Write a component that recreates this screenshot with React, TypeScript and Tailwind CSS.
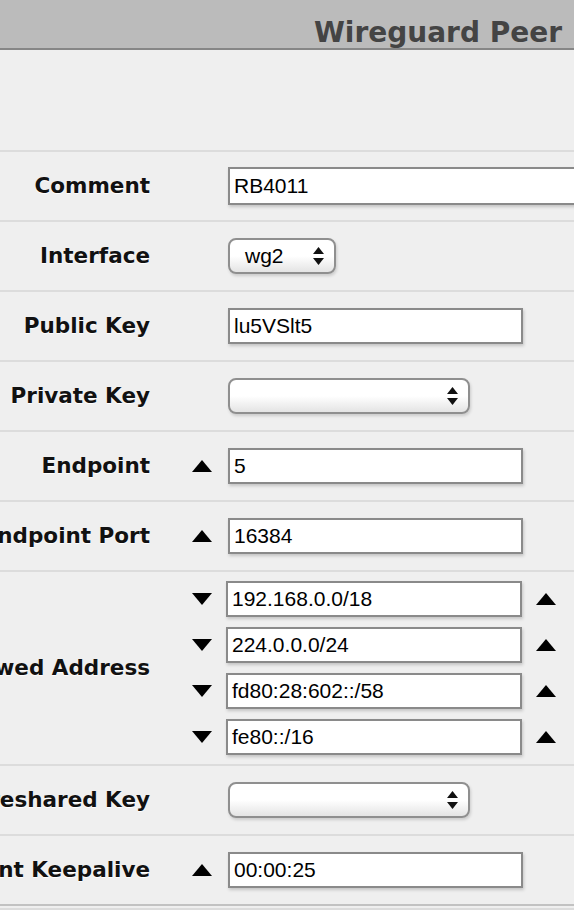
import type { ReactNode } from "react";

const labelFont = "font-['DejaVu_Sans',Verdana,sans-serif]";
const inputFont = "font-['Liberation_Sans',Arial,sans-serif]";
const labelText = `w-[150px] shrink-0 flex justify-end whitespace-nowrap ${labelFont} text-[21.5px] font-bold text-[#111] [text-shadow:0_1px_1px_#fff]`;

function Triangle({ dir }: { dir: "up" | "down" }) {
  return (
    <svg width="20" height="12" viewBox="0 0 20 12" className="block">
      {dir === "up" ? <polygon points="10,0 20,12 0,12" fill="#000" /> : <polygon points="0,0 20,0 10,12" fill="#000" />}
    </svg>
  );
}

function TextField({ value, width, height = 36 }: { value: string; width: string; height?: number }) {
  return (
    <div
      className={`${width} ${height === 38 ? "h-[38px]" : "h-[36px]"} shrink-0 flex items-center border-2 border-[#8a8a8a] bg-white pl-[4px] shadow-[1px_2px_3px_rgba(0,0,0,0.18)] ${inputFont} text-[21px] text-black`}
    >
      {value}
    </div>
  );
}

function SelectBox({ value, width }: { value: string; width: string }) {
  return (
    <div
      className={`${width} h-[36px] flex items-center justify-between rounded-[8px] border-2 border-[#8f8f8f] bg-gradient-to-b from-white via-white to-[#e4e4e4] pl-[15px] pr-[10px] shadow-[1px_2px_3px_rgba(0,0,0,0.15)] ${inputFont} text-[21px] text-black`}
    >
      <span>{value}</span>
      <svg width="11" height="19" viewBox="0 0 11 19" className="block">
        <polygon points="5.5,0 11,7 0,7" fill="#111" />
        <polygon points="0,11 11,11 5.5,18" fill="#111" />
      </svg>
    </div>
  );
}

function Row({ label, arrow, children }: { label: string; arrow?: boolean; children: ReactNode }) {
  return (
    <div className="flex items-center h-[70px] border-b-2 border-[#dcdcdc]">
      <div className={labelText}>{label}</div>
      <div className="w-[78px] shrink-0 flex justify-end pr-[16px]">{arrow ? <Triangle dir="up" /> : null}</div>
      {children}
    </div>
  );
}

const allowed = ["192.168.0.0/18", "224.0.0.0/24", "fd80:28:602::/58", "fe80::/16"];

export default function App() {
  return (
    <main className="w-[574px] h-[910px] overflow-hidden bg-[#efefef]">
      <header className="h-[50px] flex items-end justify-end border-b-2 border-[#868686] bg-[#bbbbbb] pr-[12px]">
        <h1 className={`${labelFont} text-[28px] font-bold leading-[30px] text-[#444]`}>Wireguard Peer</h1>
      </header>
      <div className="h-[102px] border-b-2 border-[#dcdcdc]" />

      <Row label="Comment">
        <TextField value="RB4011" width="w-[360px]" height={38} />
      </Row>
      <Row label="Interface">
        <SelectBox value="wg2" width="w-[108px]" />
      </Row>
      <Row label="Public Key">
        <TextField value="lu5VSlt5" width="w-[295px]" />
      </Row>
      <Row label="Private Key">
        <SelectBox value="" width="w-[242px]" />
      </Row>
      <Row label="Endpoint" arrow>
        <TextField value="5" width="w-[295px]" />
      </Row>
      <Row label="Endpoint Port" arrow>
        <TextField value="16384" width="w-[295px]" />
      </Row>

      <div className="flex items-center h-[194px] border-b-2 border-[#dcdcdc]">
        <div className={labelText}>Allowed Address</div>
        <div className="flex flex-col gap-[10px]">
          {allowed.map((addr) => (
            <div key={addr} className="flex items-center">
              <div className="w-[76px] shrink-0 flex justify-end pr-[14px]">
                <Triangle dir="down" />
              </div>
              <TextField value={addr} width="w-[296px]" />
              <div className="ml-[14px]">
                <Triangle dir="up" />
              </div>
            </div>
          ))}
        </div>
      </div>

      <Row label="Preshared Key">
        <SelectBox value="" width="w-[242px]" />
      </Row>
      <div className="flex items-center h-[70px] border-b-2 border-[#c2c2c2]">
        <div className={labelText}>Persistent Keepalive</div>
        <div className="w-[78px] shrink-0 flex justify-end pr-[16px]">
          <Triangle dir="up" />
        </div>
        <TextField value="00:00:25" width="w-[295px]" />
      </div>
      <div className="h-[2px]" />
      <div className="h-[2px] bg-[#dcdcdc]" />
    </main>
  );
}
